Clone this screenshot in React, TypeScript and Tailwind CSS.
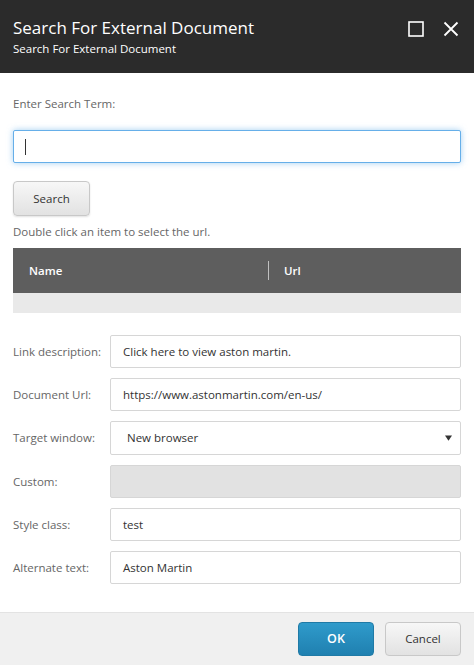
import { ReactNode } from "react";

const Field = ({ label, children }: { label: string; children: ReactNode }) => (
  <div className="flex items-center">
    <label className="w-[97px] shrink-0 text-[11.5px] text-[#666]">{label}</label>
    <div className="flex-1">{children}</div>
  </div>
);

const TextBox = ({ value }: { value: string }) => (
  <div className="flex h-[33px] items-center rounded-[2px] border border-[#d6d6d6] bg-white px-[12px] text-[11.5px] text-[#333]">
    {value}
  </div>
);

const App = () => {
  return (
    <div
      className="flex h-[665px] w-[474px] flex-col bg-white"
      style={{ fontFamily: '"Open Sans", "Noto Sans", sans-serif' }}
    >
      {/* Header */}
      <header className="flex h-[73px] shrink-0 items-start justify-between bg-[#2b2b2b] px-[13px] pt-[16px] text-white">
        <div>
          <h1 className="text-[17px] leading-[24px]">Search For External Document</h1>
          <div className="mt-[1px] text-[11.5px] leading-[16px]">Search For External Document</div>
        </div>
        <div className="mt-[5px] flex items-center gap-[19px] pr-[2px]">
          <svg width="16" height="16" viewBox="0 0 16 16" fill="none" stroke="white" strokeWidth="1.6">
            <rect x="1" y="1" width="14" height="14" />
          </svg>
          <svg width="16" height="16" viewBox="0 0 16 16" fill="none" stroke="white" strokeWidth="1.8">
            <path d="M1.5 1.5 L14.5 14.5 M14.5 1.5 L1.5 14.5" />
          </svg>
        </div>
      </header>

      {/* Body */}
      <main className="flex-1 px-[13px] pt-[23px]">
        <div className="text-[11.5px] leading-[16px] text-[#666]">Enter Search Term:</div>
        <div className="mt-[18px] flex h-[33px] items-center rounded-[2px] border border-[#66afe9] bg-white px-[11px] shadow-[0_0_6px_rgba(102,175,233,0.6)]">
          <span className="h-[16px] w-px bg-[#333]" />
        </div>
        <button className="mt-[18px] flex h-[35px] w-[77px] items-center justify-center rounded-[4px] border border-[#c8c8c8] bg-gradient-to-b from-[#f7f7f7] to-[#e2e2e2] text-[11.5px] text-[#333] shadow-[0_1px_2px_rgba(0,0,0,0.12)]">
          Search
        </button>
        <div className="mt-[8px] text-[11.5px] leading-[16px] text-[#666]">Double click an item to select the url.</div>

        <div className="mt-[8px]">
          <div className="flex h-[45px] items-center bg-[#5e5e5e] text-[11.5px] font-semibold text-white">
            <div className="w-[255px] pl-[16px]">Name</div>
            <div className="h-[19px] w-px bg-[#c0c0c0]" />
            <div className="pl-[15px]">Url</div>
          </div>
          <div className="h-[20px] bg-[#e9e9e9]" />
        </div>

        <div className="mt-[22px] flex flex-col gap-[10px]">
          <Field label="Link description:">
            <TextBox value="Click here to view aston martin." />
          </Field>
          <Field label="Document Url:">
            <TextBox value="https://www.astonmartin.com/en-us/" />
          </Field>
          <Field label="Target window:">
            <div className="flex h-[34px] items-center justify-between rounded-[2px] border border-[#d6d6d6] bg-white pl-[16px] pr-[8px] text-[11.5px] text-[#333]">
              <span>New browser</span>
              <svg width="7" height="6" viewBox="0 0 8 6">
                <path d="M0 0 H8 L4 6 Z" fill="#333" />
              </svg>
            </div>
          </Field>
          <Field label="Custom:">
            <div className="h-[33px] rounded-[2px] border border-[#d6d6d6] bg-[#e2e2e2]" />
          </Field>
          <Field label="Style class:">
            <TextBox value="test" />
          </Field>
          <Field label="Alternate text:">
            <TextBox value="Aston Martin" />
          </Field>
        </div>
      </main>

      {/* Footer */}
      <footer className="flex h-[53px] shrink-0 items-center justify-end gap-[11px] border-t border-[#e3e3e3] bg-[#f0f0f0] px-[13px]">
        <button className="flex h-[34px] w-[76px] items-center justify-center rounded-[4px] border border-[#1f7aa6] bg-gradient-to-b from-[#2f9bcb] to-[#1f80b0] text-[12.5px] font-semibold text-white">
          OK
        </button>
        <button className="flex h-[34px] w-[76px] items-center justify-center rounded-[4px] border border-[#c8c8c8] bg-gradient-to-b from-[#f7f7f7] to-[#e2e2e2] text-[11.5px] text-[#333]">
          Cancel
        </button>
      </footer>
    </div>
  );
};

export default App;
